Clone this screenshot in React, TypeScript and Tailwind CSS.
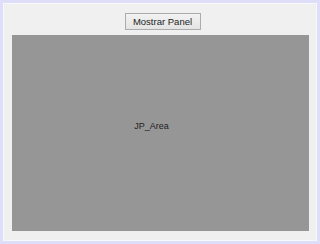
import React from 'react';

const App: React.FC = () => {
  return (
    <div
      className="w-[320px] h-[244px] border-[3px] border-[#dedef8] bg-[#dedef8]"
      style={{ fontFamily: '"Liberation Sans", Arial, sans-serif' }}
    >
      <div className="w-full h-full border border-[#f8f8fc] bg-[#f0f0f0] flex flex-col pl-[8px] pr-[7px] pb-[9px] pt-[9px]">
        {/* top button row */}
        <div className="flex justify-center pl-[4px] h-[17px] shrink-0">
          <button className="w-[76px] h-[17px] border border-[#acacac] bg-gradient-to-b from-[#f2f2f2] to-[#e4e4e4] text-[9.5px] leading-none text-[#222]">
            Mostrar Panel
          </button>
        </div>

        {/* JP_Area */}
        <div className="mt-[5px] flex-1 bg-[#969696] flex items-center justify-center pr-[18px] pb-[13px]">
          <span className="text-[9px] leading-none text-[#222]">JP_Area</span>
        </div>
      </div>
    </div>
  );
};

export default App;
